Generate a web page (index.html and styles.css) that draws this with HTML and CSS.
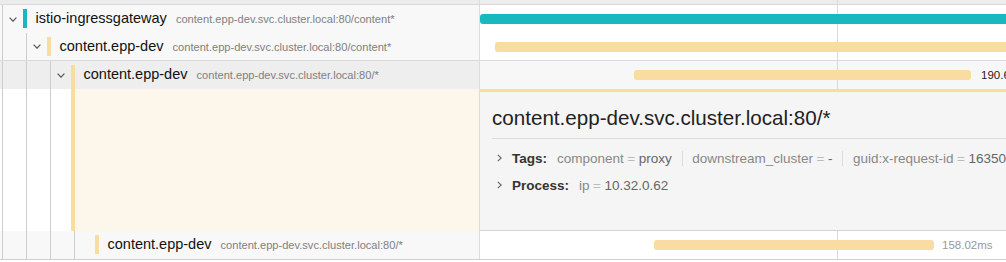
FILE: index.html
```html
<!DOCTYPE html>
<html>
<head>
<meta charset="utf-8">
<title>Trace</title>
<link rel="stylesheet" href="styles.css">
</head>
<body>
<div class="trace">
  <div class="head">
    <div class="left head-left"></div>
    <div class="right tick"></div>
  </div>

  <div class="row">
    <div class="left">
      <span class="guide own"><svg class="chev" viewBox="0 0 8 5" width="8" height="5"><polyline points="0.6,0.6 4,4.2 7.4,0.6"/></svg></span>
      <span class="svc teal"><span class="svc-name">istio-ingressgateway</span><span class="op">content.epp-dev.svc.cluster.local:80/content*</span></span>
    </div>
    <div class="right tick">
      <div class="bar teal-bg" style="margin-left:0;width:600px"></div>
    </div>
  </div>

  <div class="row sep">
    <div class="left">
      <span class="guide"></span>
      <span class="guide own"><svg class="chev" viewBox="0 0 8 5" width="8" height="5"><polyline points="0.6,0.6 4,4.2 7.4,0.6"/></svg></span>
      <span class="svc yellow"><span class="svc-name">content.epp-dev</span><span class="op">content.epp-dev.svc.cluster.local:80/content*</span></span>
    </div>
    <div class="right tick">
      <div class="bar yellow-bg" style="margin-left:15px;width:600px"></div>
    </div>
  </div>

  <div class="row open">
    <div class="left">
      <span class="guide"></span>
      <span class="guide"></span>
      <span class="guide own"><svg class="chev" viewBox="0 0 8 5" width="8" height="5"><polyline points="0.6,0.6 4,4.2 7.4,0.6"/></svg></span>
      <span class="svc yellow svc-open"><span class="svc-name">content.epp-dev</span><span class="op">content.epp-dev.svc.cluster.local:80/*</span></span>
    </div>
    <div class="right tick">
      <div class="bar yellow-bg" style="margin-left:154px;width:337px"></div>
      <span class="lbl lbl-dark">190.65ms</span>
    </div>
  </div>

  <div class="detail">
    <div class="left detail-left">
      <span class="guide"></span>
      <span class="guide"></span>
      <span class="guide own"></span>
      <span class="accent"></span>
    </div>
    <div class="right info">
      <div class="title">content.epp-dev.svc.cluster.local:80/*</div>
      <div class="kv kv-first">
        <svg class="rchev" viewBox="0 0 5 8" width="5" height="8"><polyline points="0.8,0.8 4.2,4 0.8,7.2"/></svg>
        <strong class="kv-h">Tags:</strong>
        <span class="item"><span class="k">component</span><span class="eq">=</span><span class="v">proxy</span></span>
        <span class="item"><span class="k">downstream_cluster</span><span class="eq">=</span><span class="v">-</span></span>
        <span class="item"><span class="k">guid:x-request-id</span><span class="eq">=</span><span class="v">16350a7e-4c2b-9f1d-8e3a-5b6c7d8e9f01</span></span>
      </div>
      <div class="kv kv-second">
        <svg class="rchev" viewBox="0 0 5 8" width="5" height="8"><polyline points="0.8,0.8 4.2,4 0.8,7.2"/></svg>
        <strong class="kv-h">Process:</strong>
        <span class="item"><span class="k">ip</span><span class="eq">=</span><span class="v">10.32.0.62</span></span>
      </div>
    </div>
  </div>

  <div class="row last">
    <div class="left">
      <span class="guide"></span>
      <span class="guide"></span>
      <span class="guide"></span>
      <span class="guide own"></span>
      <span class="svc yellow"><span class="svc-name">content.epp-dev</span><span class="op">content.epp-dev.svc.cluster.local:80/*</span></span>
    </div>
    <div class="right tick">
      <div class="bar yellow-bg" style="margin-left:174px;width:280px"></div>
      <span class="lbl">158.02ms</span>
    </div>
  </div>
</div>
</body>
</html>
```

FILE: styles.css
```css
* { box-sizing: border-box; }

html, body {
  margin: 0;
  padding: 0;
  background: #fff;
  overflow: hidden;
}

body {
  font-family: "Liberation Sans", Arial, sans-serif;
  width: 1006px;
  height: 262px;
}

.trace {
  width: 1006px;
  overflow: hidden;
}

.left {
  flex: 0 0 480px;
  width: 480px;
  display: flex;
  padding-left: 2px;
  border-right: 1px solid #dcdcdc;
  overflow: hidden;
}

.right {
  flex: 1;
  min-width: 0;
  display: flex;
  align-items: flex-start;
  overflow: hidden;
}

.tick {
  background-image: linear-gradient(#d9d9d9, #d9d9d9);
  background-repeat: no-repeat;
  background-position: 357px 0;
  background-size: 1px 100%;
}

/* header strip */
.head {
  display: flex;
  height: 5px;
  border-bottom: 1px solid #d9d9d9;
  background-color: #ececec;
}

/* span rows */
.row {
  display: flex;
  height: 28px;
}

.row > .left { background: #f8f8f8; }
.row > .right { background-color: #fff; padding-top: 9px; }

.row.sep { border-bottom: 1px solid #d9d9d9; }

.row.open > .left { background: #eeeeee; }
.row.open > .right { background-color: #f7f7f7; }

.row.last {
  height: 29px;
  border-bottom: 1px solid #cfcfcf;
}

.guide {
  flex: 0 0 24px;
  height: 100%;
  border-left: 1px solid #cdcdcd;
}

.guide.own {
  flex-basis: 21px;
  display: flex;
  align-items: center;
}

.chev {
  margin-left: 6px;
  fill: none;
  stroke: #555;
  stroke-width: 1.2;
}

.svc {
  margin-top: 4px;
  height: 19px;
  border-left: 4px solid;
  padding-left: 8.5px;
  line-height: 17.5px;
  white-space: nowrap;
}

.svc-open { height: 24px; }

.teal { border-left-color: #17b8be; }
.yellow { border-left-color: #f8dca1; }

.svc-name {
  font-size: 14.5px;
  color: #111;
}

.op {
  font-size: 11.1px;
  color: #808080;
  margin-left: 9px;
}

/* timeline bars */
.bar {
  flex: none;
  height: 10px;
  border-radius: 3px;
}

.teal-bg { background: #17b8be; }
.yellow-bg { background: #f8dca1; }

.lbl {
  flex: none;
  margin-left: 8px;
  font-size: 11.5px;
  line-height: 10px;
  color: #999;
  white-space: nowrap;
}

.lbl-dark { color: #222; margin-left: 10px; }

/* detail */
.detail {
  display: flex;
  height: 142px;
}

.detail-left { background: #fff; }

.accent {
  flex: 1;
  height: 100%;
  border-left: 4px solid #f8dca1;
  background: #fdf6eb;
}

.info {
  display: block;
  background: #f5f5f5;
  border-top: 3px solid #f8dca1;
  border-bottom: 1px solid #d3d3d3;
  padding: 13px 0 0 12px;
}

.title {
  font-size: 20.6px;
  line-height: 25px;
  color: #222;
  white-space: nowrap;
  padding-bottom: 8px;
  border-bottom: 1px solid #dcdcdc;
}

.kv {
  display: flex;
  align-items: center;
  height: 20px;
  font-size: 13.5px;
  white-space: nowrap;
}

.kv-first { margin-top: 9px; }
.kv-second { margin-top: 7px; }

.rchev {
  flex: none;
  margin-left: 5px;
  fill: none;
  stroke: #666;
  stroke-width: 1.1;
}

.kv-h {
  margin-left: 10px;
  margin-right: 10px;
  color: #333;
  font-weight: bold;
}

.item {
  line-height: 15px;
  padding-right: 10px;
  margin-right: 9.5px;
  border-right: 1px solid #dcdcdc;
}

.item:last-child { border-right: none; }

.k { color: #888; }
.eq { color: #bbb; padding: 0 3.5px; }
.v { color: #666; }
```
